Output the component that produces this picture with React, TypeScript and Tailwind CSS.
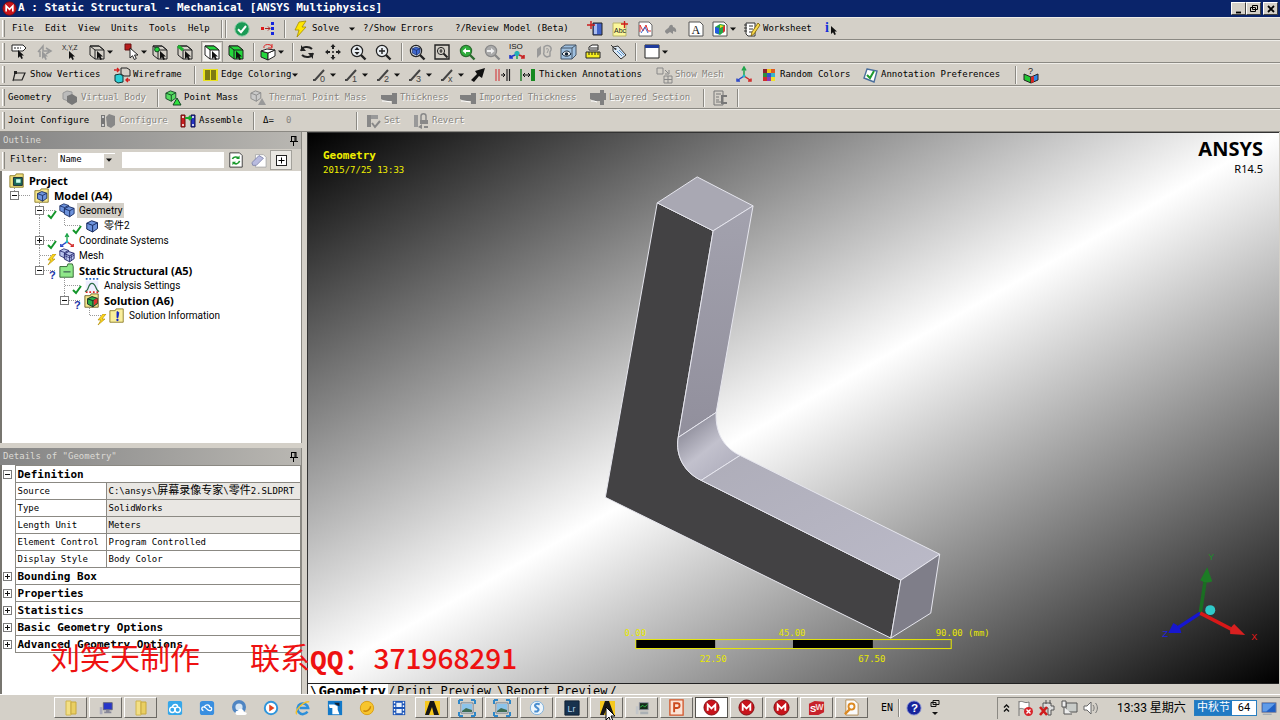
import type { ReactNode } from 'react';
import clsx from 'clsx';

const MONO = "[font-family:'DejaVu_Sans_Mono','Noto_Sans_CJK_SC',monospace]";
const SANS = "[font-family:'Roboto','Noto_Sans_CJK_SC',sans-serif]";

/* ---------- drawing helpers ---------- */

function Ico({ children, s = 18 }: { children: ReactNode; s?: number }) {
    return (
        <svg width={s} height={s} viewBox="0 0 18 18" className="shrink-0" fill="none" aria-hidden="true">
            {children}
        </svg>
    );
}

function Caret() {
    return (
        <svg width="8" height="8" viewBox="0 0 8 8" className="shrink-0" aria-hidden="true">
            <path d="M1 2.5h6L4 5.8z" fill="#111" />
        </svg>
    );
}

function Pointer({ x = 8, y = 7, fill = '#111' }) {
    return <path transform={`translate(${x} ${y})`} d="M0 0v8l2-1.8L3.4 9l1.5-.8L3.6 5.6H6z" fill={fill} />;
}

function SelectCube({ top = 'none', body = 'none', children }: { top?: string; body?: string; children?: ReactNode }) {
    return (
        <Ico>
            <path d="M2 3h9l5 4v9H7l-5-4z" fill={body} stroke="#222" />
            <path d="M2 3h9l5 4H7z" fill={top} stroke="#222" />
            <path d="M7 7v9" stroke="#222" />
            {children}
            <Pointer x={9} y={8} />
        </Ico>
    );
}

function Cube({ x = 0, y = 0, k = 1, fill = '#6d93dc', line = '#16295e' }) {
    return (
        <g transform={`translate(${x} ${y}) scale(${k})`} stroke={line} strokeLinejoin="round">
            <path d="M1 3.5L6 1l6 2v6l-5 3.5L1 9.5z" fill={fill} />
            <path d="M1 3.5l6 2.2L12 3M7 5.7v6.8" />
        </g>
    );
}

function Lens({ children, ring = '#222', fill = '#e9eef2' }: { children?: ReactNode; ring?: string; fill?: string }) {
    return (
        <Ico>
            <path d="M11.5 11.5l5 5" stroke={ring} strokeWidth="2.4" />
            <circle cx="8" cy="8" r="5.6" fill={fill} stroke={ring} strokeWidth="1.2" />
            {children}
        </Ico>
    );
}

function EdgeLine({ mark }: { mark: string }) {
    return (
        <Ico>
            <path d="M2 14h2L13 4" stroke="#444" strokeWidth="2" />
            <text x="9" y="16" fontSize="9" fill="#444" fontFamily="Liberation Sans">{mark}</text>
        </Ico>
    );
}

function Axes() {
    return (
        <g strokeWidth="1.5">
            <path d="M9 10V2M7 4.5L9 1l2 3.5" stroke="#1fa44a" />
            <path d="M9 10l-6 4M2 12.5V15h3" stroke="#2a46c8" />
            <path d="M9 10l6 4M16 12.5V15h-3" stroke="#d02828" />
            <circle cx="9" cy="10" r="1.5" fill="#20b8c8" />
        </g>
    );
}

function Clamp({ full = false }) {
    return (
        <Ico>
            <path d={full ? 'M1 4h10V1h4v3h2v7h-2v5h-4v-4H5l-4-2z' : 'M1 6h11V4h5v11h-5v-3H5l-4-2z'} fill="#808080" />
            <path d={full ? 'M2 12h3l3 1' : 'M2 12h3l6 1'} stroke="#fff" />
        </Ico>
    );
}

const icons = {
    ok: <Ico><circle cx="9" cy="9" r="7.2" fill="#1b9a55" stroke="#8fcfa9" /><path d="M5 9.2l3 3L13 6" stroke="#fff" strokeWidth="2" /></Ico>,
    connect: <Ico><path d="M2 7h3v3H2z" fill="#e01818" /><path d="M6 8.5h5M9 6.5l2 2-2 2" stroke="#a22" /><path d="M12 2h3v3h-3zM12 7h3v3h-3zM12 12h3v3h-3z" fill="#1626dd" /></Ico>,
    bolt: <Ico><path d="M7 2l7-1-4 6h4L5 17l2-7H3z" fill="#ffe600" stroke="#a38b00" strokeWidth=".8" /></Ico>,
    chartPlus: <Ico><path d="M7 3h9v12H7z" fill="#4263c8" stroke="#222" /><path d="M8 4h3v10H8z" fill="#a9bdf0" /><path d="M1 5h8M5 1v8" stroke="#c81c1c" strokeWidth="1.4" /></Ico>,
    abc: <Ico><path d="M2 3h13v13H2z" fill="#fbf79a" stroke="#b9b46b" /><text x="3" y="13" fontSize="7" fill="#222" fontFamily="Liberation Sans">Abc</text><path d="M10 4h7M13.5 1v7" stroke="#d01c1c" strokeWidth="1.3" /></Ico>,
    figure: <Ico><path d="M3 2h10l3 3v11H3z" fill="#fff" stroke="#666" /><path d="M4 12V5l3 6 3-6 2 6h3" stroke="#d33" /><path d="M5 13l4-6 3 6" stroke="#36c" /></Ico>,
    comment: <Ico><path d="M3 12c0-3 3-3 4-5 1-3 4-3 4 0 2 0 4 3 3 5l-3-1v3l-3-2-3 2z" fill="#8c8c8c" /></Ico>,
    letterA: <Ico><path d="M2 2h11l3 3v11H2z" fill="#fff" stroke="#555" /><text x="4.5" y="14" fontSize="12" fill="#111" fontFamily="Liberation Serif">A</text></Ico>,
    image: <Ico><path d="M2 2h11l3 3v11H2z" fill="#fff" stroke="#555" /><path d="M4 7l5-3 5 1v6l-5 4-5-2z" fill="#26a347" /><path d="M4 7l4 1v6l-4-1z" fill="#235be0" /><path d="M12 7l2-2v6l-2 2z" fill="#dc3030" /><path d="M9 5l4 1-4 2z" fill="#f3e01c" /></Ico>,
    worksheet: <Ico><path d="M3 3h9v13H5l-2-2z" fill="#fff" stroke="#333" /><path d="M1 5h3M1 8h3M1 11h3M6 6h4M6 9h4M6 12h3" stroke="#333" /><path d="M15 3l2 2-6 9-3 2 1-4z" fill="#f7d94c" stroke="#7a5a00" strokeWidth=".8" /></Ico>,
    info: <Ico><text x="2" y="12" fontSize="14" fontWeight="bold" fill="#1430d8" fontFamily="Liberation Serif">i</text><Pointer x={8} y={6} /></Ico>,

    label: <Ico><path d="M2 2h11l3 3-3 3H2z" fill="#fff" stroke="#222" /><path d="M4 5h7" stroke="#222" strokeDasharray="2 1" /><Pointer x={8} y={7} /></Ico>,
    probe: <Ico><path d="M2 9l5-6v5h6M10 5l5 3-5 3M4 8v6" stroke="#999" strokeWidth="1.5" /><Pointer x={6} y={8} fill="#999" /></Ico>,
    xyz: <Ico><text x="1" y="7" fontSize="6.5" fill="#222" fontFamily="Liberation Sans">X,Y,Z</text><Pointer x={8} y={8} /></Ico>,
    selMode: <Ico><path d="M3 1h6v6H3z" fill="#b91c1c" stroke="#611" /><path d="M8 5v10l2.5-2.3 1.8 3.8 2-1-1.8-3.5H16z" fill="#fff" stroke="#222" /></Ico>,
    extend: <Ico><path d="M2 8l7 2v7l-7-3z" fill="#24d63c" stroke="#222" /><path d="M9 10l7-3v6l-7 4z" fill="#fff" stroke="#222" /><path d="M2 8l6-2 8 1-7 3z" fill="#fff" stroke="#222" /><path d="M5 5a4 3 0 018-1M13 1v4h-4" stroke="#d22" /></Ico>,
    rotate: <Ico><path d="M3 8c1-5 8-5 11-2M15 10c-1 5-8 5-11 2" stroke="#222" strokeWidth="2" /><path d="M3 2v6h5zM15 16v-6h-5z" fill="#222" /></Ico>,
    pan: <Ico><path d="M9 3v3M9 12v3M3 9h3M12 9h3" stroke="#222" strokeWidth="2" /><path d="M9 1l2.500 3h-5zM9 17l2.500-3h-5zM1 9l3-2.500v5zM17 9l-3-2.500v5z" fill="#222" /><path d="M9 8v2M8 9h2" stroke="#222" /></Ico>,
    zoom: <Lens><path d="M8 4l2.5 3h-5zM8 12l2.5-3h-5z" fill="#222" /></Lens>,
    zoomBox: <Lens><path d="M8 5v6M5 8h6" stroke="#222" strokeWidth="1.4" /></Lens>,
    zoomFit: <Lens><Cube x={3.6} y={3.4} k={0.7} fill="#3f68cf" /></Lens>,
    magnifier: <Ico><path d="M2 2h14v14H2z" stroke="#222" strokeWidth="1.4" /><circle cx="8" cy="8" r="3.6" stroke="#222" /><path d="M10.5 10.5l4 4" stroke="#222" strokeWidth="2" /><path d="M8 6v4M6.5 8h3" stroke="#222" /></Ico>,
    prev: <Lens ring="#2b6b2f" fill="#2fae3c"><path d="M4.5 8L8 5v2h4v2H8v2z" fill="#fff" /></Lens>,
    next: <Lens ring="#888" fill="#aaa"><path d="M11.5 8L8 5v2H4v2h4v2z" fill="#eee" /></Lens>,
    iso: <Ico><text x="1" y="6" fontSize="8" fill="#111" fontFamily="Liberation Sans">ISO</text><path d="M9 8v8" stroke="#1fa44a" strokeWidth="1.5" /><circle cx="9" cy="10.5" r="2.6" fill="#24b0b6" /><path d="M7 12l-5 2M2 12v3h3" stroke="#2036c8" strokeWidth="1.6" /><path d="M11 12l5 2M16 12v3h-3" stroke="#c82222" strokeWidth="1.6" /></Ico>,
    lookAt: <Ico><path d="M2 6l4-3v8l-4 4z" fill="#999" /><path d="M9 4c3-3 8-1 7 3l-1 2v4l-3 1c-3-1-4-3-3-5z" stroke="#999" strokeWidth="1.4" /><path d="M11 6c2-1 3 0 2 2l-1 2" stroke="#999" /></Ico>,
    viewEye: <Ico><path d="M2 5l4-3h11v10l-4 4H2z" fill="#9fc0df" stroke="#456" /><path d="M2 5h11v11M13 5l4-3" stroke="#456" /><path d="M3 11c3-4 7-4 9 0-3 3-6 3-9 0z" fill="#fff" stroke="#123" /><circle cx="7.500" cy="11" r="1.800" fill="#123" /></Ico>,
    ruler: <Ico><path d="M2 9h14v6H2z" fill="#f6ee1f" stroke="#222" /><path d="M5 9v3M8 9v3M11 9v3M14 9v3" stroke="#222" /><path d="M5 7V4l3-2h6v5z" fill="#fff" stroke="#222" /><path d="M6 5h8" stroke="#222" /></Ico>,
    tag: <Ico><path d="M3 4l5-1 8 9-5 4-8-8z" fill="#dbe9f6" stroke="#333" /><path d="M7 8l5 5M9 7l5 5" stroke="#5b92c8" /><circle cx="5.5" cy="6" r="1" fill="#333" /><path d="M1 2l4 4" stroke="#333" /></Ico>,
    window: <Ico><path d="M2 2h14v13H2z" fill="#fff" stroke="#222" /><path d="M2 2h14v3H2z" fill="#203c9c" /></Ico>,

    vertices: <Ico><path d="M3 15l2-8h10l-3 7H4" stroke="#222" strokeWidth="1.2" /><path d="M4 5h3v3H4z" fill="#222" /></Ico>,
    wireframe: <Ico><path d="M8 2h6l3 2v6h-6L8 8z" stroke="#222" /><path d="M2 9l5-1 3 2v6l-5 1-3-2z" fill="#2ccfd6" stroke="#133" /><path d="M1 4h5M4 2l2 2-2 2" stroke="#d22020" strokeWidth="1.4" /><path d="M17 14h-4M15 12l-2 2 2 2" stroke="#d22020" strokeWidth="1.4" /></Ico>,
    edgeColor: <Ico><path d="M2 3h15v12H2z" fill="#e9e21c" /><path d="M4 4h5v10H4zM10 4h5v10h-5z" fill="#7d7a12" /></Ico>,
    dirArrow: <Ico><path d="M16 2l-3 10-3-2-5 6-3-2 6-6-2-3z" fill="#111" /></Ico>,
    thin: <Ico><path d="M3 3v12M6 3v12" stroke="#d45a5a" strokeWidth="1.4" /><path d="M8 9h4M10 7l2 2-2 2" stroke="#111" /><path d="M14 3v12M16.5 3v12" stroke="#222" strokeWidth="1.2" /></Ico>,
    thicken: <Ico><path d="M2 3v12" stroke="#197a22" strokeWidth="1.4" /><path d="M4 9h7M6 7L4 9l2 2M9 7l2 2-2 2" stroke="#111" /><path d="M12 3h4v12h-4z" fill="#168a20" /></Ico>,
    showMesh: <Ico><path d="M2 2h6v6H2z" stroke="#888" /><path d="M10 4l3 3M14 4v4h-4" stroke="#888" /><path d="M9 10h8v7H9zM13 10v7M9 13.5h8" stroke="#888" /></Ico>,
    axes: <Ico><Axes /></Ico>,
    random: <Ico><path d="M3 3h4v4H3z" fill="#8a1f2f" /><path d="M7 3h4v4H7z" fill="#f2c419" /><path d="M11 3h4v4h-4z" fill="#e05a1e" /><path d="M3 7h4v4H3z" fill="#2e8f3d" /><path d="M7 7h4v4H7z" fill="#3550c9" /><path d="M11 7h4v4h-4z" fill="#38b6c9" /><path d="M3 11h4v4H3z" fill="#d02c2c" /><path d="M7 11h4v4H7z" fill="#8e3ab1" /><path d="M11 11h4v4h-4z" fill="#f0e22a" /></Ico>,
    prefs: <Ico><path d="M6 3l10 2-3 11-10-4z" fill="#fff" stroke="#4a6e9b" strokeWidth="1.4" /><path d="M6 9l3 3 4-7" stroke="#1f9a2e" strokeWidth="2" /></Ico>,
    helpCube: <Ico><path d="M2 8l7 3v6l-7-3z" fill="#23c734" stroke="#222" /><path d="M9 11l7-3v6l-7 3z" fill="#2f86e8" stroke="#222" /><path d="M9 11l3-1v6l-3 1z" fill="#d62626" /><text x="6" y="8" fontSize="9" fill="#222" fontFamily="Liberation Sans">?</text></Ico>,

    virtualBody: <Ico><path d="M2 4l4-2 5 1v7l-4 2-5-2z" fill="#bbb" stroke="#999" /><path d="M6 7l5-2 5 3v5l-5 3-5-3z" fill="#777" /></Ico>,
    pointMass: <Ico><Cube x={1} y={1} k={0.9} fill="#57dd62" line="#142" /><path d="M13 9l4 7H9z" fill="#2ee03e" stroke="#142" /></Ico>,
    thermalMass: <Ico><Cube x={1} y={1} k={0.9} fill="#c9c9c9" line="#888" /><path d="M13 9l4 7H9z" fill="#999" /></Ico>,
    clamp: <Clamp />,
    clampFull: <Clamp full />,
    sheet: <Ico><path d="M3 2h9v14H3z" stroke="#777" /><path d="M5 5h5M5 8h3M5 11h3M5 13h5" stroke="#777" /><path d="M16 7h-5v7h5" stroke="#777" strokeWidth="2" /></Ico>,
    configure: <Ico><path d="M2 3h4v12H2z" fill="#777" /><path d="M7 5l3-3 6 2v9l-4 3-4-2z" fill="#888" /><circle cx="4" cy="5" r="1" fill="#eee" /><circle cx="4" cy="13" r="1" fill="#eee" /></Ico>,
    assemble: <Ico><path d="M2 3h4v12H2z" fill="#c91f1f" stroke="#611" /><path d="M12 3h4v12h-4z" fill="#2633c4" stroke="#114" /><path d="M6 6h6M10 4l2 2-2 2" stroke="#19a82c" strokeWidth="2" /><circle cx="4" cy="5" r="1" fill="#fff" /><circle cx="4" cy="13" r="1" fill="#fff" /><circle cx="14" cy="5" r="1" fill="#fff" /><circle cx="14" cy="13" r="1" fill="#fff" /></Ico>,
    setJoint: <Ico><path d="M3 3h4v12H3z" fill="#888" /><path d="M7 3h7v4H7z" fill="#999" /><path d="M8 11l3 4 5-6" stroke="#888" strokeWidth="2" /></Ico>,
    revert: <Ico><path d="M2 3h4v12H2z" fill="#999" /><path d="M9 8V4c0-3 5-3 5 0v4" stroke="#888" strokeWidth="1.5" /><path d="M8 8h8v4H8zM6 15l4-3v5zM12 14h4v2h-4z" fill="#888" /></Ico>,
};

/* ---------- toolbars ---------- */

function Bar({ children }: { children: ReactNode }) {
    return (
        <div className="flex h-[23px] shrink-0 items-center overflow-hidden border-b border-t border-b-[#8b8983] border-t-[#efede8] bg-[#d4d0c8]">
            {children}
        </div>
    );
}

function Grip({ w }: { w: string }) {
    return (
        <div className={clsx('h-[17px] shrink-0 pl-0.5', w)}>
            <div className="h-full w-[3px] border-l border-r border-l-white border-r-[#8b8983]" />
        </div>
    );
}

function Sep({ w = 'w-2' }: { w?: string }) {
    return (
        <div className={clsx('h-[18px] shrink-0', w)}>
            <div className="h-full w-0.5 border-l border-r border-l-[#8b8983] border-r-[#f6f5f2]" />
        </div>
    );
}

type ToolProps = { w: string; icon?: ReactNode; label?: string; name?: string; caret?: boolean; off?: boolean; down?: boolean };

function Tool({ w, icon, label, name, caret, off, down }: ToolProps) {
    return (
        <div className={clsx('flex h-full shrink-0 items-center', w)}>
            <button
                disabled={off}
                aria-label={label ? undefined : name}
                className={clsx(
                    'flex items-center whitespace-nowrap',
                    off ? 'text-[#86847f] [text-shadow:1px_1px_0_#fff]' : 'text-black',
                    !icon && 'pl-0.5',
                    down && 'bg-[#f3f2ee] outline outline-1 outline-offset-1 outline-[#9a9892]',
                )}
            >
                {icon}
                {label && <span className={clsx(icon && 'pl-0.5')}>{label}</span>}
                {caret && <Caret />}
            </button>
        </div>
    );
}

function Toolbars() {
    return (
        <header className="shrink-0">
            <Bar>
                <Grip w="w-2.5" />
                <Tool w="w-[33px]" label="File" />
                <Tool w="w-[33px]" label="Edit" />
                <Tool w="w-[33px]" label="View" />
                <Tool w="w-[38px]" label="Units" />
                <Tool w="w-[39px]" label="Tools" />
                <Tool w="w-[35px]" label="Help" />
                <Sep w="w-1" />
                <Sep />
                <Tool w="w-[26px]" icon={icons.ok} name="Status" />
                <Tool w="w-[25px]" icon={icons.connect} name="Connections" />
                <Sep />
                <Tool w="w-[54px]" icon={icons.bolt} label="Solve" />
                <Tool w="w-[15px]" name="Solve options" caret />
                <Tool w="w-[92px]" label="?/Show Errors" />
                <Tool w="w-[133px]" label="?/Review Model (Beta)" />
                <Tool w="w-[25px]" icon={icons.chartPlus} name="New chart" />
                <Tool w="w-[25px]" icon={icons.abc} name="New annotation" />
                <Tool w="w-[26px]" icon={icons.figure} name="New figure" />
                <Tool w="w-[25px]" icon={icons.comment} name="Comment" off />
                <Tool w="w-[24px]" icon={icons.letterA} name="Text" />
                <Tool w="w-[32px]" icon={icons.image} name="Image" caret />
                <Tool w="w-[80px]" icon={icons.worksheet} label="Worksheet" />
                <Tool w="w-[26px]" icon={icons.info} name="Selection information" />
            </Bar>
            <Bar>
                <Grip w="w-2.5" />
                <Tool w="w-[26px]" icon={icons.label} name="Label" />
                <Tool w="w-[25px]" icon={icons.probe} name="Direction" off />
                <Tool w="w-[27px]" icon={icons.xyz} name="Coordinates" />
                <Tool w="w-[34px]" icon={<SelectCube />} name="Select type" caret />
                <Tool w="w-[29px]" icon={icons.selMode} name="Select mode" caret />
                <Tool w="w-[25px]" icon={<SelectCube><circle cx="6" cy="6.5" r="2.4" fill="#24d63c" stroke="#142" /></SelectCube>} name="Vertex" />
                <Tool w="w-[27px]" icon={<SelectCube><path d="M2 3l5 4" stroke="#1db52f" strokeWidth="3" /></SelectCube>} name="Edge" />
                <Tool w="w-[24px]" icon={<SelectCube top="#24d63c" body="#fff" />} name="Face" down />
                <Tool w="w-[26px]" icon={<SelectCube top="#24d63c" body="#24d63c" />} name="Body" />
                <Sep w="w-1.5" />
                <Tool w="w-[33px]" icon={icons.extend} name="Extend" caret />
                <Sep w="w-1.5" />
                <Tool w="w-[26px]" icon={icons.rotate} name="Rotate" />
                <Tool w="w-[25px]" icon={icons.pan} name="Pan" />
                <Tool w="w-[25px]" icon={icons.zoom} name="Zoom" />
                <Tool w="w-[27px]" icon={icons.zoomBox} name="Box zoom" />
                <Sep w="w-[7px]" />
                <Tool w="w-[25px]" icon={icons.zoomFit} name="Zoom to fit" />
                <Tool w="w-[25px]" icon={icons.magnifier} name="Magnifier" />
                <Tool w="w-[25px]" icon={icons.prev} name="Previous view" />
                <Tool w="w-[25px]" icon={icons.next} name="Next view" off />
                <Tool w="w-[27px]" icon={icons.iso} name="Isometric view" />
                <Tool w="w-[24px]" icon={icons.lookAt} name="Look at" off />
                <Tool w="w-[25px]" icon={icons.viewEye} name="Manage views" />
                <Tool w="w-[26px]" icon={icons.ruler} name="Rescale annotation" />
                <Tool w="w-[25px]" icon={icons.tag} name="Tags" />
                <Sep />
                <Tool w="w-[34px]" icon={icons.window} name="Viewports" caret />
            </Bar>
            <Bar>
                <Grip w="w-2.5" />
                <Tool w="w-[103px]" icon={icons.vertices} label="Show Vertices" />
                <Tool w="w-[81px]" icon={icons.wireframe} label="Wireframe" />
                <Sep w="w-[7px]" />
                <Tool w="w-[110px]" icon={icons.edgeColor} label="Edge Coloring" caret />
                <Tool w="w-[32px]" icon={<EdgeLine mark="0" />} name="Free edges" caret />
                <Tool w="w-[32px]" icon={<EdgeLine mark="1" />} name="Single edges" caret />
                <Tool w="w-[32px]" icon={<EdgeLine mark="2" />} name="Double edges" caret />
                <Tool w="w-[32px]" icon={<EdgeLine mark="3" />} name="Triple edges" caret />
                <Tool w="w-[30px]" icon={<EdgeLine mark="x" />} name="Multiple edges" caret />
                <Tool w="w-[24px]" icon={icons.dirArrow} name="Edge direction" />
                <Tool w="w-[26px]" icon={icons.thin} name="Thin annotations" />
                <Tool w="w-[136px]" icon={icons.thicken} label="Thicken Annotations" />
                <Tool w="w-[80px]" icon={icons.showMesh} label="Show Mesh" off />
                <Tool w="w-[25px]" icon={icons.axes} name="Coordinate systems" />
                <Tool w="w-[101px]" icon={icons.random} label="Random Colors" />
                <Tool w="w-[154px]" icon={icons.prefs} label="Annotation Preferences" />
                <Sep w="w-[7px]" />
                <Tool w="w-[26px]" icon={icons.helpCube} name="Body help" />
            </Bar>
            <Bar>
                <Grip w="w-1.5" />
                <Tool w="w-[55px]" label="Geometry" />
                <Tool w="w-[96px]" icon={icons.virtualBody} label="Virtual Body" off />
                <Sep w="w-[7px]" />
                <Tool w="w-[85px]" icon={icons.pointMass} label="Point Mass" />
                <Tool w="w-[131px]" icon={icons.thermalMass} label="Thermal Point Mass" off />
                <Tool w="w-[79px]" icon={icons.clamp} label="Thickness" off />
                <Tool w="w-[130px]" icon={icons.clamp} label="Imported Thickness" off />
                <Tool w="w-[114px]" icon={icons.clampFull} label="Layered Section" off />
                <Sep />
                <Tool w="w-[26px]" icon={icons.sheet} name="Commands" off />
                <Sep />
            </Bar>
            <Bar>
                <Grip w="w-1.5" />
                <Tool w="w-[93px]" label="Joint Configure" />
                <Tool w="w-[80px]" icon={icons.configure} label="Configure" off />
                <Tool w="w-[74px]" icon={icons.assemble} label="Assemble" />
                <Sep w="w-2.5" />
                <label htmlFor="delta" className="w-[23px] shrink-0">Δ=</label>
                <input id="delta" defaultValue="0" className="w-[70px] shrink-0 bg-transparent text-[#86847f] outline-none" />
                <Sep />
                <Tool w="w-[48px]" icon={icons.setJoint} label="Set" off />
                <Tool w="w-[60px]" icon={icons.revert} label="Revert" off />
            </Bar>
        </header>
    );
}

/* ---------- outline ---------- */

const treeIcons = {
    project: <Ico s={16}><path d="M1 3h6l1-2h8v15H1z" fill="#f0df7a" stroke="#8a7a26" /><path d="M5 5h10v9H5z" fill="#1b6b5b" stroke="#123" /><path d="M8 7h5v4H8z" fill="#cfe" /></Ico>,
    model: <Ico s={16}><path d="M1 3h6l1-2h8v15H1z" fill="#f5e68c" stroke="#8a7a26" /><Cube x={3} y={3} k={0.95} /></Ico>,
    geometry: <Ico s={16}><Cube x={0} y={0} k={0.9} /><Cube x={5} y={3} k={1} /></Ico>,
    part: <Ico s={16}><Cube x={2} y={2} k={1.1} /></Ico>,
    coords: <Ico s={16}><Axes /></Ico>,
    mesh: <Ico s={16}><Cube x={0} y={0} k={0.9} fill="#b9c4ee" line="#1c1f66" /><Cube x={5} y={3} k={1} fill="#b9c4ee" line="#1c1f66" /><path d="M8 6v7M14 8v6M7 9l5 2 5-3" stroke="#1c1f66" strokeWidth=".7" /></Ico>,
    structural: <Ico s={16}><path d="M1 4h8l1-3h5l1 3v12H1z" fill="#8fe88a" stroke="#2c5f2c" /><path d="M5 10h8" stroke="#234" /></Ico>,
    settings: <Ico s={16}><path d="M2 3h14v12H2z" fill="#eef" /><path d="M2 1h14" stroke="#26c" strokeWidth="2" strokeDasharray="2 2" /><path d="M2 16h14" stroke="#d22" strokeWidth="2" strokeDasharray="2 2" /><path d="M1 15c5 0 3-9 8-9s4 9 8 9" stroke="#2a6b45" strokeWidth="1.4" /></Ico>,
    solution: <Ico s={16}><path d="M1 3h6l1-2h8v15H1z" fill="#f5e68c" stroke="#6b6026" /><Cube x={3} y={3} k={1} fill="#2bb04a" line="#122" /><path d="M11 8l4-2v5l-4 3z" fill="#d33" /></Ico>,
    report: <Ico s={16}><path d="M1 3h6l1-2h8v15H1z" fill="#f9ee9c" stroke="#8a7a26" /><path d="M9 4l2 1-1 6H9z" fill="#1526c6" stroke="#1526c6" /><circle cx="9.5" cy="13.5" r="1.3" fill="#1526c6" /></Ico>,
};

const marks = {
    check: <path d="M1 6l3 3 5-7" stroke="#13962a" strokeWidth="2" />,
    bolt: <path d="M6 0L1 6h3L1 11l7-6H5l4-5z" fill="#ffd91c" stroke="#a98500" strokeWidth=".6" />,
    question: <text x="2" y="10" fontSize="11" fontWeight="bold" fill="#1a35a8" fontFamily="Liberation Sans">?</text>,
};

type TreeNode = { text: string; icon: keyof typeof treeIcons; guides: string[]; open?: '+' | '-'; mark?: keyof typeof marks; bold?: boolean; selected?: boolean };

const TREE: TreeNode[] = [
    { text: 'Project', icon: 'project', guides: [], bold: true },
    { text: 'Model (A4)', icon: 'model', guides: ['l'], open: '-', bold: true },
    { text: 'Geometry', icon: 'geometry', guides: ['', 't'], open: '-', mark: 'check', selected: true },
    { text: '零件2', icon: 'part', guides: ['', 'v', 'l'], mark: 'check' },
    { text: 'Coordinate Systems', icon: 'coords', guides: ['', 't'], open: '+', mark: 'check' },
    { text: 'Mesh', icon: 'mesh', guides: ['', 't'], mark: 'bolt' },
    { text: 'Static Structural (A5)', icon: 'structural', guides: ['', 'l'], open: '-', mark: 'question', bold: true },
    { text: 'Analysis Settings', icon: 'settings', guides: ['', '', 't'], mark: 'check' },
    { text: 'Solution (A6)', icon: 'solution', guides: ['', '', 'l'], open: '-', mark: 'question', bold: true },
    { text: 'Solution Information', icon: 'report', guides: ['', '', '', 'l'], mark: 'bolt' },
];

function Expander({ sign }: { sign: '+' | '-' }) {
    return (
        <>
            <rect x="5.5" y="3.5" width="8" height="8" fill="#fff" stroke="#7c7c7c" />
            <path d={sign === '+' ? 'M7 7.5h5M9.5 5v5' : 'M7 7.5h5'} stroke="#111" />
        </>
    );
}

function Guide({ kind, sign }: { kind: string; sign?: '+' | '-' }) {
    return (
        <svg width="25" height="15" viewBox="0 0 25 15" fill="none" className="shrink-0">
            <g stroke="#999" strokeDasharray="1 1">
                {kind && <path d={kind === 'l' ? 'M9.5 0v8' : 'M9.5 0v15'} />}
                {(kind === 'l' || kind === 't') && <path d="M10 7.5h15" />}
            </g>
            {sign && <Expander sign={sign} />}
        </svg>
    );
}

function PanelTitle({ children }: { children: ReactNode }) {
    return (
        <div className="flex h-[17px] shrink-0 items-center justify-between bg-linear-to-r from-[#858585] to-[#b9b7b2] px-[3px] text-[#dcdad5]">
            <h2>{children}</h2>
            <button aria-label="Pin">
                <svg width="9" height="11" viewBox="0 0 9 11" fill="none">
                    <path d="M2.5 1v5M2 1.5h5M6 1v5M7 1v5M1 6.5h8M4.5 7v4" stroke="#000" />
                </svg>
            </button>
        </div>
    );
}

function Outline() {
    return (
        <section className="flex flex-[311] flex-col overflow-hidden border-r border-[#8b8983] bg-white">
            <PanelTitle>Outline</PanelTitle>
            <div className="flex h-[22px] shrink-0 items-center bg-[#d4d0c8]">
                <Grip w="w-2.5" />
                <label htmlFor="filter" className="w-12 shrink-0">Filter:</label>
                <div className="relative flex shrink-0">
                    <select id="filter" className="h-[15px] w-[57px] appearance-none bg-white pl-0.5 text-[9px] outline-none">
                        <option>Name</option>
                    </select>
                    <span className="pointer-events-none absolute right-0 top-0 flex h-[15px] w-3 items-center justify-center bg-[#d4d0c8] shadow-[inset_1px_1px_#fff]">
                        <Caret />
                    </span>
                </div>
                <input aria-label="Filter text" className="ml-[7px] mr-1 h-4 min-w-0 flex-1 bg-white px-1 outline-none" />
                <button aria-label="Refresh" className="w-[19px] shrink-0">
                    <Ico s={16}><path d="M2 1h11l3 3v13H2z" fill="#fff" stroke="#333" /><path d="M5 8c1-3 5-3 7-1M13 10c-1 4-5 4-7 2" stroke="#1b9a2e" strokeWidth="1.8" /><path d="M13 4v4H9zM5 15v-4h4z" fill="#1b9a2e" /></Ico>
                </button>
                <button aria-label="Clear" className="w-[23px] shrink-0 pl-1">
                    <Ico s={16}><path d="M5 3h9l3 3v11H5z" fill="#fff" stroke="#aaa" /><path d="M1 12l8-8 5 3-8 8H2z" fill="#b8bbdf" stroke="#8084ab" /></Ico>
                </button>
                <button aria-label="Expand all" className="mr-[9px] flex h-5 w-[22px] shrink-0 items-center justify-center border border-[#a3a19b] bg-[#e9e7e2]">
                    <svg width="11" height="11" viewBox="0 0 11 11" fill="none"><rect x=".5" y=".5" width="10" height="10" fill="#fff" stroke="#222" /><path d="M2.5 5.5h6M5.5 2.5v6" stroke="#000" /></svg>
                </button>
            </div>
            <ul className={clsx('flex-1 border-l-2 border-[#77756f] pl-[3px] pt-0.5 text-[10px] leading-[15px]', SANS)}>
                {TREE.map((n) => (
                    <li key={n.text} className="flex h-[15px] items-center whitespace-nowrap">
                        {n.guides.map((g, i) => (
                            <Guide key={i} kind={g} sign={i === n.guides.length - 1 ? n.open : undefined} />
                        ))}
                        <span className="relative ml-1 mr-0.5 flex shrink-0">
                            {n.mark && (
                                <svg width="11" height="12" viewBox="0 0 11 12" fill="none" className="absolute -left-3 top-1.5">
                                    {marks[n.mark]}
                                </svg>
                            )}
                            {treeIcons[n.icon]}
                        </span>
                        <span
                            className={clsx(
                                'px-0.5',
                                n.bold && "text-[11px] font-bold [font-family:'Noto_Sans',sans-serif]",
                                n.selected && 'bg-[#d4d0c8]',
                            )}
                        >
                            {n.text}
                        </span>
                    </li>
                ))}
            </ul>
        </section>
    );
}

/* ---------- details ---------- */

const DEFINITION: { name: string; value: ReactNode; fixed?: boolean }[] = [
    { name: 'Source', value: <>C:\ansys\<span className="text-[11px]">屏幕录像专家</span>\<span className="text-[11px]">零件</span>2.SLDPRT</>, fixed: true },
    { name: 'Type', value: 'SolidWorks', fixed: true },
    { name: 'Length Unit', value: 'Meters', fixed: true },
    { name: 'Element Control', value: 'Program Controlled' },
    { name: 'Display Style', value: 'Body Color' },
];

const GROUPS = ['Bounding Box', 'Properties', 'Statistics', 'Basic Geometry Options', 'Advanced Geometry Options'];

function GroupRow({ sign, children }: { sign: '+' | '-'; children: ReactNode }) {
    return (
        <tr className="h-[17px]">
            <td className="w-[13px] p-0">
                <button aria-label={sign === '+' ? 'Expand' : 'Collapse'} className="flex pl-px">
                    <svg width="9" height="9" viewBox="5 3 9 9" fill="none"><Expander sign={sign} /></svg>
                </button>
            </td>
            <th colSpan={2} className="border border-[#8b8983] p-0 pl-0.5 text-left text-[11px] font-bold">{children}</th>
        </tr>
    );
}

function Details() {
    return (
        <section className="flex flex-[246] flex-col overflow-hidden border-r border-[#8b8983] bg-white">
            <PanelTitle>Details of "Geometry"</PanelTitle>
            <div className="flex-1 border-l-2 border-[#77756f]">
                <table className="w-full table-fixed border-collapse whitespace-nowrap leading-[15px]">
                    <colgroup>
                        <col className="w-[13px]" />
                        <col className="w-[91px]" />
                        <col />
                    </colgroup>
                    <tbody>
                        <GroupRow sign="-">Definition</GroupRow>
                        {DEFINITION.map((d) => (
                            <tr key={d.name} className="h-[17px]">
                                <td className="p-0" />
                                <td className="border border-[#8b8983] p-0 pl-0.5">{d.name}</td>
                                <td className={clsx('overflow-hidden border border-[#8b8983] p-0 pl-0.5', d.fixed && 'bg-[#e9e7e3]')}>{d.value}</td>
                            </tr>
                        ))}
                        {GROUPS.map((g) => <GroupRow key={g} sign="+">{g}</GroupRow>)}
                    </tbody>
                </table>
            </div>
        </section>
    );
}

/* ---------- graphics window ---------- */

function Scene() {
    return (
        <svg viewBox="308 132 971 551" className="absolute inset-0 h-full w-full" fill="none">
            <defs>
                <linearGradient id="side" x1="0" y1="0" x2="0" y2="1"><stop stopColor="#a3a2ae" /><stop offset="1" stopColor="#918f9c" /></linearGradient>
                <linearGradient id="fillet" x1="690" y1="430" x2="722" y2="470" gradientUnits="userSpaceOnUse"><stop stopColor="#9897a4" /><stop offset=".5" stopColor="#c2c1cd" /><stop offset="1" stopColor="#b3b2c0" /></linearGradient>
                <linearGradient id="arm" x1="0" y1="0" x2="1" y2="1"><stop stopColor="#aeadb9" /><stop offset="1" stopColor="#bbbac8" /></linearGradient>
            </defs>
            <g stroke="#e6e6ee" strokeLinejoin="round">
                <path d="M657 202L713 230L678 437C675 455 684 472 701 480L901 580L891 638L605 497Z" fill="#434244" />
                <path d="M657 202L697 176L753 205L713 230Z" fill="#a9a8b3" />
                <path d="M713 230L753 205L716 412L678 437Z" fill="url(#side)" />
                <path d="M678 437L716 412C715 434 725 448 740 455L701 480C684 472 675 455 678 437Z" fill="url(#fillet)" />
                <path d="M701 480L740 455L940 554L901 580Z" fill="url(#arm)" />
                <path d="M901 580L940 554L931 613L891 638Z" fill="#7f7e89" />
            </g>
            <rect x="635.5" y="639.5" width="316" height="9" stroke="#e8e800" />
            <path d="M636 640h79v8h-79zM793 640h80v8h-80z" fill="#000" />
            <g fill="#e8e800" fontSize="9" fontFamily="DejaVu Sans Mono, monospace" textAnchor="middle">
                <text x="635" y="636">0.00</text>
                <text x="792" y="636">45.00</text>
                <text x="963" y="636">90.00 (mm)</text>
                <text x="713" y="662">22.50</text>
                <text x="872" y="662">67.50</text>
            </g>
            <path d="M1201 613L1206 580" stroke="#1a6e22" strokeWidth="3.5" />
            <path d="M1208 567L1213 581Q1207 584 1201 580Z" fill="#1c7c25" />
            <path d="M1201 613L1178 628" stroke="#1616d0" strokeWidth="3.5" />
            <path d="M1169 633L1174 623Q1181 626 1182 633Z" fill="#1717cf" />
            <circle cx="1211" cy="610" r="5" fill="#2fc9c9" />
            <path d="M1201 613L1234 630" stroke="#d81818" strokeWidth="3.5" />
            <path d="M1246 635L1235 624Q1230 628 1231 634Z" fill="#d92020" />
            <g fontSize="10" fontFamily="Liberation Mono, monospace">
                <text x="1209" y="560" fill="#1f8a2a">Y</text>
                <text x="1252" y="640" fill="#e01818">X</text>
                <text x="1163" y="637" fill="#2020e0">Z</text>
            </g>
        </svg>
    );
}

function Viewport() {
    return (
        <main className="mr-px flex min-w-0 flex-1 flex-col border-l border-t border-[#333] bg-[#d4d0c8]">
            <div className="relative min-h-0 flex-1 border-b border-[#222] bg-linear-to-br/srgb from-black via-white to-black">
                <Scene />
                <div className="absolute left-[15px] top-4 leading-[14px] text-[#f0f000]">
                    <h1 className="text-[11px] font-bold">Geometry</h1>
                    <p>2015/7/25 13:33</p>
                </div>
                <div className="absolute right-4 top-0.5 text-right text-black [font-family:'Noto_Sans',sans-serif]">
                    <p className="text-[20px] font-bold leading-[27px]">ANSYS</p>
                    <p className="text-[11px] leading-[13px]">R14.5</p>
                </div>
            </div>
            <nav className="flex h-[10px] shrink-0 items-start overflow-hidden whitespace-nowrap text-[12px] leading-[14px]">
                <button className="flex bg-white pl-0.5 pr-0.5 text-[14px] font-bold"><span className="font-normal">\</span>Geometry</button>
                <button className="flex pr-1">/<span className="px-0.5">Print Preview</span></button>
                <button className="flex">\<span className="px-0.5">Report Preview</span>/</button>
            </nav>
        </main>
    );
}

/* ---------- taskbar ---------- */

function RedM({ s = 17 }) {
    return (
        <Ico s={s}>
            <circle cx="9" cy="9" r="8" fill="#c8141c" stroke="#7d0c10" />
            <path d="M5 12.500V6l4 4 4-4v6.500" stroke="#fff" strokeWidth="2" />
        </Ico>
    );
}

const folder = <Ico><path d="M4 2h5v14H4z" fill="#f3df85" stroke="#d0b64e" /><path d="M9 3h5v12H9z" fill="#e9cf63" stroke="#c7a83e" /></Ico>;
const picture = <Ico><path d="M1 1h4M1 1v4M17 1h-4M17 1v4M1 17h4M1 17v-4M17 17h-4M17 17v-4" stroke="#2e87c8" strokeWidth="2" /><path d="M3 4h12v10H3z" fill="#fff" stroke="#678" /><path d="M4 5h10v8H4z" fill="#8cc4ea" /><path d="M4 12l4-3 6 2v2H4z" fill="#3f6d54" /></Ico>;
const ansys = <Ico><path d="M2 2h15v14H2z" fill="#f6c81d" /><path d="M2 16L7 2h4l5 14h-5L9 8l-3 8z" fill="#161616" /></Ico>;

const TASKS: { name: string; icon: ReactNode; flat?: boolean; active?: boolean; cursor?: boolean }[] = [
    { name: 'Folder', icon: folder },
    { name: 'Computer', icon: <Ico s={16}><path d="M6 3h10v8H6z" fill="#2736c9" stroke="#667" /><path d="M9 11h4v2H9zM7 13h8v2H7z" fill="#889" /><path d="M2 8h3v8H2z" fill="#aab" /></Ico> },
    { name: 'Documents', icon: folder },
    { name: 'Cloud', icon: <Ico s={16}><rect x="1" y="1" width="16" height="16" rx="2" fill="#35a7ea" /><circle cx="6" cy="11" r="3" stroke="#fff" strokeWidth="1.6" /><circle cx="12" cy="11" r="3" stroke="#fff" strokeWidth="1.6" /><path d="M6 8c1-4 6-4 6 0" stroke="#fff" strokeWidth="1.6" /></Ico>, flat: true },
    { name: 'Sync', icon: <Ico s={16}><rect x="1" y="1" width="16" height="16" rx="3" fill="#3a8fe0" /><path d="M5 12c-3-1-2-5 1-4 1-4 6-3 6 0 3 0 3 4 0 4-3 0-4-4-6-4" stroke="#fff" strokeWidth="1.4" /></Ico>, flat: true },
    { name: 'Browser', icon: <Ico><circle cx="9" cy="8" r="7" fill="#4f85c2" /><circle cx="9" cy="8" r="3.6" fill="#d8e7f5" /><path d="M7 16c-3-1-1-5 1-4 1-4 6-2 6 1 4 0 3 3 1 3z" fill="#fff" /></Ico>, flat: true },
    { name: 'Player', icon: <Ico s={16}><circle cx="9" cy="9" r="7" fill="#fff" stroke="#2f95dc" strokeWidth="2.2" /><path d="M7 5l6 4-6 4z" fill="#e2421f" /></Ico>, flat: true },
    { name: 'Internet Explorer', icon: <Ico s={16}><path d="M14 13a6 6 0 11.800-4H5" stroke="#2c8fda" strokeWidth="2.800" /><path d="M2 16C-1 12 10 1 16 2" stroke="#f2c12c" strokeWidth="1.6" /></Ico>, flat: true },
    { name: 'Reader', icon: <Ico s={16}><path d="M1 1h16v16H1z" fill="#1279c9" /><path d="M2 5h6l4 2v4l2 5H6V9H3z" fill="#fff" /><path d="M8 3h6v4l-4-2z" fill="#123" /></Ico>, flat: true },
    { name: 'Messenger', icon: <Ico s={16}><circle cx="9" cy="9" r="7.5" fill="#f7c52d" stroke="#d89c12" /><path d="M5 12c3 2 8-1 8-5" stroke="#c98508" strokeWidth="1.6" /></Ico>, flat: true },
    { name: 'Video', icon: <Ico s={16}><path d="M2 1h14v16H2z" fill="#1c55b8" /><path d="M6 3h6v5H6zM6 10h6v5H6z" fill="#eaf2fc" /><path d="M4 2v14M14 2v14" stroke="#fff" strokeWidth="1.6" strokeDasharray="2 2" /></Ico>, flat: true },
    { name: 'Workbench', icon: ansys },
    { name: 'Viewer', icon: picture },
    { name: 'Viewer 2', icon: picture },
    { name: 'Sogou', icon: <Ico s={16}><circle cx="9" cy="9" r="7.5" fill="#eef6fc" stroke="#79aedb" /><path d="M12 5c-4-2-7 1-4 3s4 3 1 5H6" stroke="#4b8fd0" strokeWidth="2.4" /></Ico> },
    { name: 'Lightroom', icon: <Ico s={16}><path d="M1 1h16v16H1z" fill="#17324e" stroke="#0d1d30" /><text x="4" y="13" fontSize="10" fill="#b5d3ea" fontFamily="Liberation Sans">Lr</text></Ico> },
    { name: 'ANSYS', icon: ansys, cursor: true },
    { name: 'Console', icon: <Ico s={16}><path d="M6 3h10v8H6z" fill="#142b1a" stroke="#99a" /><path d="M7 8l3-2 2 2 3-3" stroke="#2fca4c" /><path d="M2 7h3v9H2z" fill="#c3c6c9" /><path d="M7 13h9v3H7z" fill="#aab0b4" /></Ico> },
    { name: 'PowerPoint', icon: <Ico s={17}><path d="M2 1h14v16H2z" fill="#fbe3d6" stroke="#d2562a" strokeWidth="1.4" /><path d="M6.5 14V4.5H10c3 0 3 5 0 5H7" stroke="#cc4a1e" strokeWidth="2" /></Ico> },
    { name: 'Mechanical', icon: <RedM />, active: true },
    { name: 'Mechanical 2', icon: <RedM /> },
    { name: 'Mechanical 3', icon: <RedM /> },
    { name: 'SolidWorks', icon: <Ico s={17}><path d="M1 5l6-3 10 1v11l-6 3H1z" fill="#c7222b" /><text x="2" y="14" fontSize="10" fontWeight="bold" fill="#fff" fontFamily="Liberation Sans">S</text><text x="8" y="12" fontSize="9" fontWeight="bold" fill="#f6d5d5" fontFamily="Liberation Sans">W</text></Ico> },
    { name: 'Search', icon: <Ico s={17}><path d="M3 1h9l4 4v12H3z" fill="#fbfbfb" stroke="#b48d55" /><circle cx="9" cy="8" r="3.2" stroke="#dd8a22" strokeWidth="2" /><path d="M7 11l-5 5" stroke="#dd8a22" strokeWidth="2.4" /></Ico> },
];

function Taskbar() {
    return (
        <footer className="flex h-[26px] shrink-0 items-center border-t border-white bg-[#d4d0c8] pl-[54px]">
            {TASKS.map((t) => (
                <button
                    key={t.name}
                    aria-label={t.name}
                    className={clsx(
                        'relative flex h-[21px] shrink-0 items-center justify-center',
                        t.flat ? 'w-8' : 'mr-0.5 w-[33px] border',
                        !t.flat && (t.active ? 'border-[#55534e] bg-white' : 'border-b-[#6b6964] border-l-white border-r-[#6b6964] border-t-white'),
                    )}
                >
                    {t.icon}
                    {t.cursor && (
                        <svg width="12" height="18" viewBox="0 0 12 18" className="absolute left-3.5 top-2">
                            <path d="M1 1v13l3-3 2 5 2-1-2-5h4z" fill="#fff" stroke="#000" />
                        </svg>
                    )}
                </button>
            ))}
            <span className="ml-[11px] w-[17px] shrink-0 text-[10px]">EN</span>
            <Sep />
            <button aria-label="Help" className="w-6 shrink-0">
                <Ico s={16}><circle cx="9" cy="9" r="8" fill="#16249c" stroke="#8f98d8" /><text x="5.5" y="14" fontSize="13" fontWeight="bold" fill="#fff" fontFamily="Liberation Sans">?</text></Ico>
            </button>
            <button aria-label="Language options" className="flex shrink-0">
                <svg width="10" height="18" viewBox="0 0 10 18" fill="none"><path d="M3 1.5h6v4H3zM1 3.5h5v4H1z" fill="#d4d0c8" stroke="#111" /><path d="M2 13h6l-3 3z" fill="#111" /></svg>
            </button>
            <div className={clsx('ml-auto flex h-[22px] w-[283px] shrink-0 items-center border-l border-t border-[#8b8983] text-[11px]', SANS)}>
                <button aria-label="Show hidden icons" className="w-[18px] pl-1">
                    <svg width="9" height="10" viewBox="0 0 9 10" fill="none"><path d="M2 4.5L4.5 2 7 4.5M2 8.5L4.5 6 7 8.5" stroke="#111" strokeWidth="1.4" /></svg>
                </button>
                <span className="flex w-[101px] gap-1">
                    <Ico><path d="M3 2v15M3 3c4-2 5 2 10 0v7c-5 2-6-2-10 0" fill="#fff" stroke="#777" /><circle cx="12.5" cy="12.5" r="4.5" fill="#d8242a" /><path d="M10.5 10.5l4 4M14.5 10.5l-4 4" stroke="#fff" strokeWidth="1.4" /></Ico>
                    <Ico><path d="M5 4h8v3h3v4h-3v5h-3V9H5z" fill="#ddd" stroke="#555" /><path d="M8 1v4M12 1v4" stroke="#555" /><path d="M2 8l7 8M9 8l-7 8" stroke="#d01c1c" strokeWidth="2.6" /></Ico>
                    <Ico><path d="M6 4h11v9H6z" fill="#c8cbc8" stroke="#555" /><path d="M2 2h4v6H2zM4 8v7h8" stroke="#555" fill="#eee" /></Ico>
                    <Ico><path d="M2 7h3l4-4v12l-4-4H2z" fill="#fff" stroke="#666" /><path d="M11 6c1.500 2 1.500 4 0 6M13.500 4c2.500 3 2.500 7 0 10" stroke="#777" /></Ico>
                </span>
                <time className="w-[77px] whitespace-nowrap text-[12px]">13:33 星期六</time>
                <span className="flex h-4 items-center border border-[#2a7fc0] bg-white">
                    <span className="flex h-full items-center bg-[#1f7ac4] px-0.5 text-white">中秋节</span>
                    <span className="w-6 text-center">64</span>
                </span>
                <span className="ml-1"><Ico s={16}><path d="M1 3h16v11H1z" fill="#1f5fc4" stroke="#889" /><path d="M2 4h14L6 13H2z" fill="#5f9be8" /><path d="M2 16h10" stroke="#89a" /></Ico></span>
            </div>
        </footer>
    );
}

/* ---------- page ---------- */

function TitleBar() {
    return (
        <div className="flex h-[17px] shrink-0 items-center bg-[#0a246a] text-white">
            <span className="w-[18px] shrink-0 pl-0.5"><RedM s={15} /></span>
            <span className="flex-1 whitespace-pre text-[11px] font-bold">A : Static Structural - Mechanical [ANSYS Multiphysics]</span>
            <div className="flex pr-0.5">
                {['M3 9.500h5', 'M4.500 2.500h5v4h-5zM2.500 4.500h5v4h-5z', 'M3 3l6 6M9 3l-6 6'].map((d, i) => (
                    <button
                        key={d}
                        aria-label={['Minimize', 'Restore', 'Close'][i]}
                        className={clsx('flex h-[13px] w-[15px] items-center justify-center border border-b-[#404040] border-l-white border-r-[#404040] border-t-white bg-[#d4d0c8]', i === 2 && 'ml-0.5')}
                    >
                        <svg width="12" height="11" viewBox="0 0 12 11" fill="none"><path d={d} stroke="#000" strokeWidth={i === 1 ? 1 : 1.8} /></svg>
                    </button>
                ))}
            </div>
        </div>
    );
}

export default function App() {
    return (
        <div className={clsx('relative flex h-screen flex-col overflow-hidden bg-[#d4d0c8] text-[9px] text-black', MONO)}>
            <TitleBar />
            <Toolbars />
            <div className="flex min-h-0 flex-1">
                <div className="mr-[5px] flex w-[302px] shrink-0 flex-col gap-[5px]">
                    <Outline />
                    <Details />
                </div>
                <Viewport />
            </div>
            <Taskbar />
            <p className="pointer-events-none absolute bottom-10 left-[50px] flex items-baseline whitespace-pre text-[30px] leading-9 text-[#ee1111] [font-family:'Noto_Sans_CJK_SC',sans-serif]">
                <span className="mr-[50px]">刘笑天制作</span>
                <span>联系</span>
                <span className="text-[28px] font-bold [font-family:'Liberation_Mono',monospace]">QQ</span>
                <span>：</span>
                <span className="text-[28px] font-medium">371968291</span>
            </p>
        </div>
    );
}
